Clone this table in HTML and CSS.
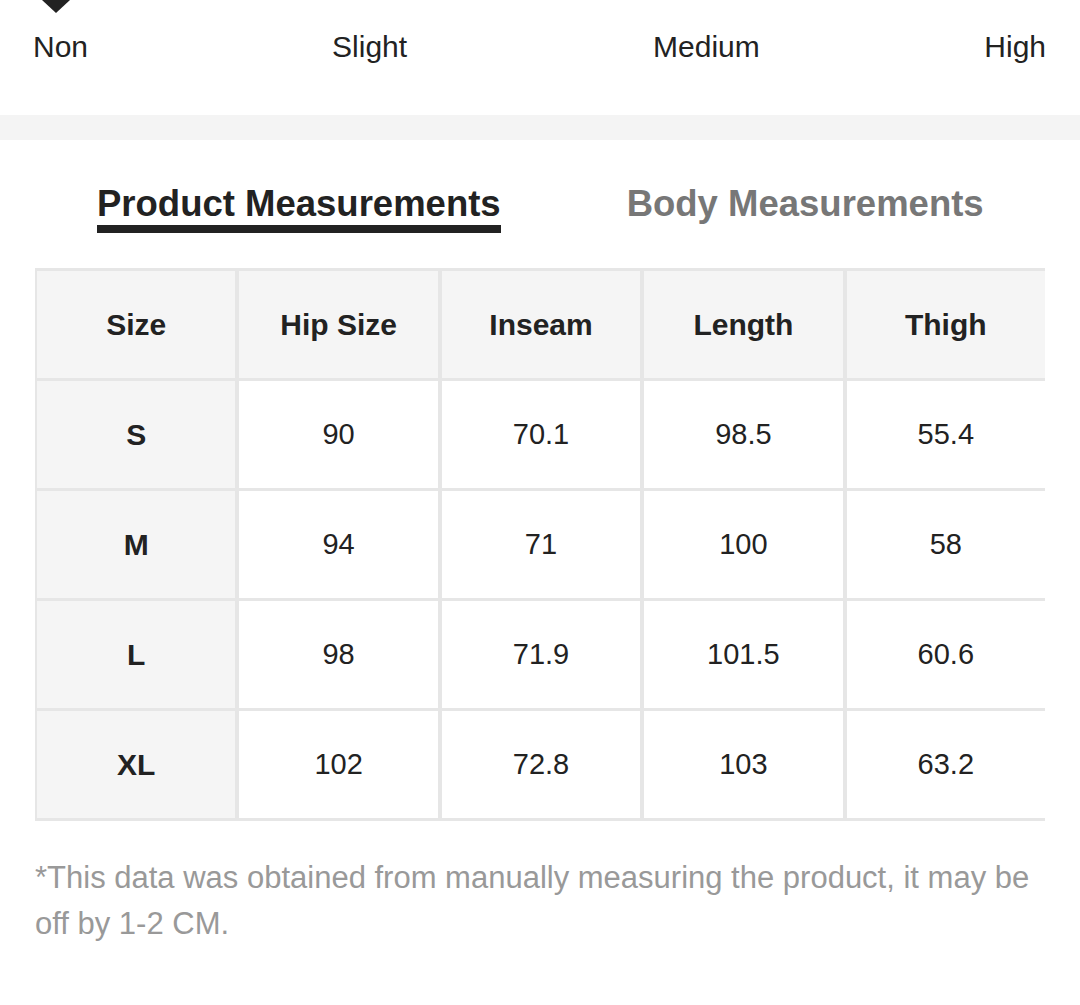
FILE: index.html
```html
<!DOCTYPE html>
<html lang="en">
<head>
<meta charset="utf-8">
<title>Size Guide</title>
<link rel="stylesheet" href="styles.css">
</head>
<body>
<section class="stretch">
  <div class="marker-row">
    <svg class="marker" width="28" height="13" viewBox="0 0 28 13"><polygon points="0,0 28,0 14,13" fill="#222"/></svg>
  </div>
  <div class="levels">
    <span class="lvl lvl-non">Non</span>
    <span class="lvl lvl-slight">Slight</span>
    <span class="lvl lvl-medium">Medium</span>
    <span class="lvl lvl-high">High</span>
  </div>
</section>
<div class="band"></div>
<section class="measure">
  <div class="tabs">
    <span class="tab active">Product Measurements</span>
    <span class="tab">Body Measurements</span>
  </div>
  <div class="table">
    <div class="cell head">Size</div>
    <div class="cell head">Hip Size</div>
    <div class="cell head">Inseam</div>
    <div class="cell head">Length</div>
    <div class="cell head">Thigh</div>

    <div class="cell size">S</div>
    <div class="cell">90</div>
    <div class="cell">70.1</div>
    <div class="cell">98.5</div>
    <div class="cell">55.4</div>

    <div class="cell size">M</div>
    <div class="cell">94</div>
    <div class="cell">71</div>
    <div class="cell">100</div>
    <div class="cell">58</div>

    <div class="cell size">L</div>
    <div class="cell">98</div>
    <div class="cell">71.9</div>
    <div class="cell">101.5</div>
    <div class="cell">60.6</div>

    <div class="cell size">XL</div>
    <div class="cell">102</div>
    <div class="cell">72.8</div>
    <div class="cell">103</div>
    <div class="cell">63.2</div>
  </div>
  <p class="note">*This data was obtained from manually measuring the product, it may be off by 1-2 CM.</p>
</section>
</body>
</html>
```
FILE: styles.css
```css
html, body {
  margin: 0;
  padding: 0;
  background: #fff;
}
body {
  font-family: "Liberation Sans", Arial, Helvetica, sans-serif;
  color: #222;
  width: 1080px;
  overflow: hidden;
}
.stretch {
  height: 115px;
}
.marker-row {
  height: 13px;
  padding-left: 42px;
}
.marker {
  display: block;
}
.levels {
  display: flex;
  padding: 16px 34px 0 33px;
  font-size: 30px;
  line-height: 36px;
}
.lvl-slight { margin-left: 244px; }
.lvl-medium { margin-left: 246px; }
.lvl-high { margin-left: auto; }

.band {
  height: 25px;
  background: #f4f4f4;
}
.measure {
  padding: 0 35px;
}
.tabs {
  display: flex;
  align-items: flex-start;
  gap: 126px;
  padding: 43px 0 0 62px;
}
.tab {
  font-size: 36.5px;
  font-weight: bold;
  line-height: 42px;
  color: #777;
  border-bottom: 8px solid transparent;
}
.tab.active {
  color: #222;
  border-bottom-color: #222;
}
.table {
  margin-top: 35px;
  display: grid;
  grid-template-columns: repeat(5, 1fr);
  grid-auto-rows: 107px;
  column-gap: 4px;
  row-gap: 3px;
  padding: 3px 0 3px 2px;
  background: #e6e6e6;
}
.cell {
  display: flex;
  align-items: center;
  justify-content: center;
  background: #fff;
  font-size: 29px;
  color: #222;
}
.cell.head,
.cell.size {
  background: #f5f5f5;
  font-weight: bold;
  font-size: 30px;
}
.note {
  margin: 34px 0 0;
  font-size: 31px;
  line-height: 46px;
  color: #999;
}
```
